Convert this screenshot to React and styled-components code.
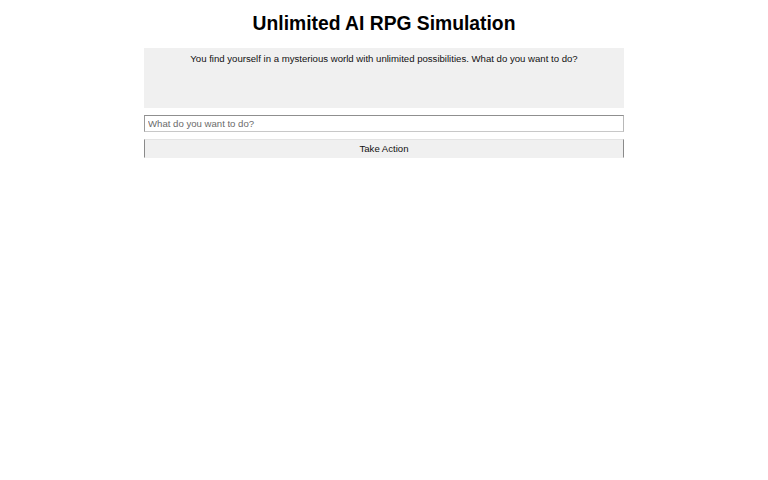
import React, { useState } from "react";
import styled, { createGlobalStyle } from "styled-components";

const GlobalStyle = createGlobalStyle`
  body {
    margin: 0;
    background: #ffffff;
    font-family: "Liberation Sans", Arial, sans-serif;
    color: #000;
  }
`;

const Page = styled.div`
  width: 480px;
  margin: 0 auto;
  display: flex;
  flex-direction: column;
`;

const Title = styled.h1`
  font-size: 19.3px;
  line-height: 23px;
  font-weight: bold;
  text-align: center;
  margin: 12px -60px 13px;
`;

const Story = styled.div`
  background: #f0f0f0;
  min-height: 50px;
  padding: 5px 10px;
  font-size: 9.6px;
  line-height: 12px;
  text-align: center;
  color: #111;
`;

const ActionInput = styled.input`
  margin-top: 7px;
  height: 17px;
  box-sizing: border-box;
  padding: 0 3px;
  border: 1px solid #9a9a9a;
  border-color: #8f8f8f #b8b8b8 #c8c8c8 #9a9a9a;
  font-family: "Liberation Sans", Arial, sans-serif;
  font-size: 9.6px;
  outline: none;

  &::placeholder {
    color: #6a6a6a;
  }
`;

const ActionButton = styled.button`
  margin-top: 7px;
  height: 19px;
  box-sizing: border-box;
  background: #f0f0f0;
  border: 1px solid;
  border-color: #e4e4e4 #8a8a8a #f0f0f0 #8a8a8a;
  font-family: "Liberation Sans", Arial, sans-serif;
  font-size: 9.6px;
  color: #111;
  cursor: pointer;
  padding: 0;
`;

export default function App() {
  const [text, setText] = useState("");
  return (
    <>
      <GlobalStyle />
      <Page>
        <Title>Unlimited AI RPG Simulation</Title>
        <Story>
          You find yourself in a mysterious world with unlimited possibilities. What do you want to do?
        </Story>
        <ActionInput
          value={text}
          onChange={(e) => setText(e.target.value)}
          placeholder="What do you want to do?"
        />
        <ActionButton>Take Action</ActionButton>
      </Page>
    </>
  );
}
